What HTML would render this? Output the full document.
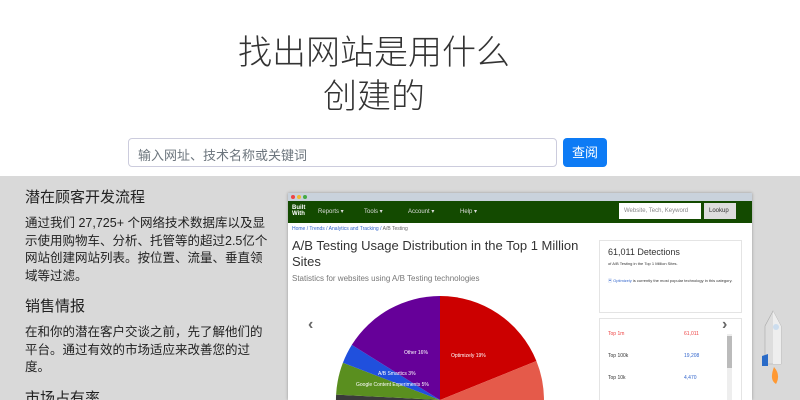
<!DOCTYPE html>
<html><head><meta charset="utf-8"><style>
*{margin:0;padding:0;box-sizing:border-box}
html,body{width:800px;height:400px;overflow:hidden}
body{background:#fff;font-family:"Liberation Sans","Noto Sans CJK SC",sans-serif;position:relative}
h1{position:absolute;left:0;width:748px;top:31px;text-align:center;font-weight:300;font-size:34px;line-height:44px;color:#333}
.inp{position:absolute;left:128px;top:138px;width:429px;height:29px;border:1px solid #ccd;border-radius:4px;font-size:13px;color:#6c757d;padding:6px 9px}
.btn{position:absolute;left:563px;top:138px;width:44px;height:29px;background:#0d7bf5;border-radius:4px;color:#fff;font-size:13px;text-align:center;line-height:29px}
.gray{position:absolute;left:0;top:176px;width:800px;height:224px;background:#d9d9d9}
.col{position:absolute;left:25px;top:188px;width:247px;height:212px;overflow:hidden;color:#222}
.col h3{font-weight:400;font-size:15px;line-height:20px;margin-bottom:7px}
.col p{font-size:12.5px;line-height:17.5px;margin-bottom:12px}
.shot{position:absolute;left:288px;top:193px;width:464px;height:207px;background:#fff;box-shadow:0 0 3px rgba(0,0,0,.3);overflow:hidden}
.bar{height:8px;background:#c9d2dc;position:relative}
.bar i{position:absolute;top:2px;width:4px;height:4px;border-radius:2px}
.nav{height:22px;background:#134a00;position:relative;color:#ddd;font-size:6px}
.nav span{position:absolute;top:7px}
</style></head><body>
<h1>找出网站是用什么<br>创建的</h1>
<div class="inp">输入网址、技术名称或关键词</div>
<div class="btn">查阅</div>
<div class="gray"></div>
<div class="col">
<h3>潜在顾客开发流程</h3>
<p>通过我们 27,725+ 个网络技术数据库以及显示使用购物车、分析、托管等的超过2.5亿个网站创建网站列表。按位置、流量、垂直领域等过滤。</p>
<h3>销售情报</h3>
<p>在和你的潜在客户交谈之前，先了解他们的平台。通过有效的市场适应来改善您的过度。</p>
<h3>市场占有率</h3>
</div>
<div class="shot">
<div class="bar"><i style="left:3px;background:#e44"></i><i style="left:9px;background:#eb3"></i><i style="left:15px;background:#4a4"></i></div>
<div class="nav"><span style="left:4px;top:4px;font-weight:bold;color:#fff;font-size:6px">Built<br>With</span><span style="left:30px">Reports ▾</span><span style="left:76px">Tools ▾</span><span style="left:120px">Account ▾</span><span style="left:172px">Help ▾</span>
<div style="position:absolute;left:331px;top:2px;width:82px;height:16px;background:#fff;color:#888;font-size:6px;padding:5px 5px">Website, Tech, Keyword</div>
<div style="position:absolute;left:416px;top:2px;width:32px;height:16px;background:#ddd;color:#333;font-size:6px;padding:5px 5px">Lookup</div></div>
<div style="font-size:5px;color:#36c;position:absolute;left:4px;top:33px">Home / Trends / Analytics and Tracking / <span style="color:#666">A/B Testing</span></div>
<div style="position:absolute;left:4px;top:45px;width:300px;font-size:13px;line-height:16px;color:#333">A/B Testing Usage Distribution in the Top 1 Million Sites</div>
<div style="position:absolute;left:4px;top:81px;font-size:8px;color:#777">Statistics for websites using A/B Testing technologies</div>
<div style="position:absolute;left:311px;top:47px;width:143px;height:73px;border:1px solid #e4e4e4;padding:6px 8px;font-size:9px;color:#333">61,011 Detections<div style="font-size:4px;margin-top:4px">of A/B Testing in the Top 1 Million Sites.</div><div style="font-size:4px;margin-top:12px"><span style="color:#36c">▣ Optimizely</span> is currently the most popular technology in this category.</div></div>
<div style="position:absolute;left:311px;top:125px;width:143px;height:90px;border:1px solid #e4e4e4;font-size:5px;color:#333">
<div style="position:absolute;left:8px;top:12px;color:#e44">Top 1m</div><div style="position:absolute;left:84px;top:12px;color:#e44">61,011</div>
<div style="position:absolute;left:8px;top:34px">Top 100k</div><div style="position:absolute;left:84px;top:34px;color:#36c">19,208</div>
<div style="position:absolute;left:8px;top:56px">Top 10k</div><div style="position:absolute;left:84px;top:56px;color:#36c">4,470</div>
<div style="position:absolute;left:127px;top:15px;width:5px;height:75px;background:#eee"><div style="height:32px;margin-top:2px;background:#bbb"></div></div></div>
<div style="position:absolute;left:20px;top:123px;font-size:16px;color:#666;font-weight:bold">‹</div>
<div style="position:absolute;left:434px;top:123px;font-size:16px;color:#666;font-weight:bold">›</div>
</div>
<svg style="position:absolute;left:0;top:0" width="800" height="400">
<path d="M440 400L440 296A104 104 0 0 1 536.4 361Z" fill="#cc0000"/>
<path d="M440 400L536.4 361A104 104 0 0 1 492 490Z" fill="#e55a4a"/>
<path d="M440 400L492 490A104 104 0 0 1 373 479.7Z" fill="#f0a020"/>
<path d="M440 400L373 479.7A104 104 0 0 1 336.1 394.6Z" fill="#3a3a3a"/>
<path d="M440 400L336.1 394.6A104 104 0 0 1 342.9 362.8Z" fill="#5a8f1f"/>
<path d="M440 400L342.9 362.8A104 104 0 0 1 351.8 344.9Z" fill="#2050dd"/>
<path d="M440 400L351.8 344.9A104 104 0 0 1 440 296Z" fill="#660099"/>
<g font-size="5" fill="#fff" font-family="Liberation Sans"><text x="404" y="354">Other 16%</text><text x="451" y="357">Optimizely 19%</text><text x="378" y="375">A/B Smartics 3%</text><text x="356" y="386">Google Content Experiments 5%</text></g>
<path d="M773 311L781 326V364H765V326Z" fill="#ddd" stroke="#aaa" stroke-width=".6"/>
<path d="M773 311L781 326V364H773Z" fill="#eee"/>
<circle cx="776" cy="327" r="3" fill="#cde"/>
<path d="M762 356L768 354V366L762 366Z" fill="#2a6bc8"/>
<path d="M774 367Q781 375 776 384Q769 380 774 367Z" fill="#f93"/>
</svg>
</body></html>
